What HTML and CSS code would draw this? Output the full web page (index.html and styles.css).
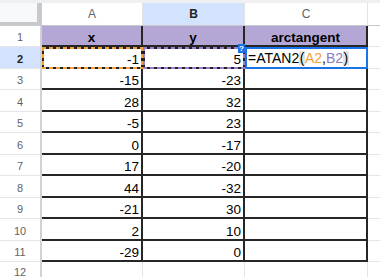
FILE: index.html
```html
<!DOCTYPE html>
<html>
<head>
<meta charset="utf-8">
<link rel="stylesheet" href="styles.css">
</head>
<body>
<div class="strip"></div>
<div class="sheet">
  <div class="corner"></div>
  <div class="colhead">A</div>
  <div class="colhead sel">B</div>
  <div class="colhead">C</div>
  <div class="colhead blank"></div>

  <div class="rowhead">1</div>
  <div class="cell th">x</div>
  <div class="cell th">y</div>
  <div class="cell th">arctangent</div>
  <div class="gap"></div>

  <div class="rowhead sel">2</div>
  <div class="cell num">-1<span class="ants ants-a"></span></div>
  <div class="cell num">5<span class="ants ants-b"></span></div>
  <div class="cell edit"><span class="badge">?</span>=ATAN2<span class="paren">(</span><span class="ref-a">A2</span>,<span class="ref-b">B2</span><span class="paren">)</span></div>
  <div class="gap"></div>

  <div class="rowhead">3</div>
  <div class="cell num">-15</div>
  <div class="cell num">-23</div>
  <div class="cell"></div>
  <div class="gap"></div>

  <div class="rowhead">4</div>
  <div class="cell num">28</div>
  <div class="cell num">32</div>
  <div class="cell"></div>
  <div class="gap"></div>

  <div class="rowhead">5</div>
  <div class="cell num">-5</div>
  <div class="cell num">23</div>
  <div class="cell"></div>
  <div class="gap"></div>

  <div class="rowhead">6</div>
  <div class="cell num">0</div>
  <div class="cell num">-17</div>
  <div class="cell"></div>
  <div class="gap"></div>

  <div class="rowhead">7</div>
  <div class="cell num">17</div>
  <div class="cell num">-20</div>
  <div class="cell"></div>
  <div class="gap"></div>

  <div class="rowhead">8</div>
  <div class="cell num">44</div>
  <div class="cell num">-32</div>
  <div class="cell"></div>
  <div class="gap"></div>

  <div class="rowhead">9</div>
  <div class="cell num">-21</div>
  <div class="cell num">30</div>
  <div class="cell"></div>
  <div class="gap"></div>

  <div class="rowhead">10</div>
  <div class="cell num">2</div>
  <div class="cell num">10</div>
  <div class="cell"></div>
  <div class="gap"></div>

  <div class="rowhead">11</div>
  <div class="cell num">-29</div>
  <div class="cell num">0</div>
  <div class="cell"></div>
  <div class="gap"></div>

  <div class="rowhead last">12</div>
  <div class="empty"></div>
  <div class="empty"></div>
  <div class="empty"></div>
  <div class="gap last"></div>
</div>
</body>
</html>
```

FILE: styles.css
```css
html, body {
  margin: 0;
  padding: 0;
  background: #ffffff;
  overflow: hidden;
}

body {
  width: 380px;
  height: 277px;
  font-family: "Liberation Sans", Arial, sans-serif;
}

.strip {
  height: 3px;
  background: #eef0f1;
}

.sheet {
  display: grid;
  grid-template-columns: 42px 101px 102px 123px 12px;
  grid-template-rows: 22.5px repeat(11, 21.5px) 1fr;
  height: 274px;
}

.corner {
  box-sizing: border-box;
  background: #f8f9fa;
  border-right: 5px solid #c7c9cc;
  border-bottom: 4px solid #c7c9cc;
}

.colhead {
  box-sizing: border-box;
  display: flex;
  align-items: center;
  justify-content: center;
  border-right: 1px solid #e1e3e6;
  border-bottom: 1px solid #c4c7cb;
  font-size: 12px;
  line-height: 14px;
  color: #5f6368;
  background: #ffffff;
}

.colhead.sel {
  background: #d3e3fd;
  color: #1f1f1f;
  font-weight: bold;
}

.colhead.blank {
  border-right: none;
}

.rowhead {
  box-sizing: border-box;
  display: flex;
  align-items: center;
  justify-content: center;
  padding-top: 4px;
  border-right: 2px solid #d0d3d6;
  border-bottom: 1px solid #e3e5e8;
  font-size: 11px;
  line-height: 13px;
  color: #5f6368;
}

.rowhead.sel {
  background: #d3e3fd;
  color: #1f1f1f;
  font-weight: bold;
}

.rowhead.last {
  border-bottom: none;
}

.cell {
  box-sizing: border-box;
  position: relative;
  display: flex;
  align-items: flex-end;
  border-right: 2px solid #262626;
  border-bottom: 2px solid #262626;
  font-size: 13.5px;
  line-height: 14px;
  color: #000000;
}

.th {
  justify-content: center;
  background: #b4a7d6;
  font-weight: bold;
}

.num {
  justify-content: flex-end;
  padding-right: 2px;
}

.edit {
  align-items: center;
  border: 2px solid #1a73e8;
  padding-left: 1px;
  background: #ffffff;
  font-size: 14px;
  z-index: 2;
}

.paren {
  background: #e3e4e6;
  line-height: 14px;
  padding: 0 0.5px;
}

.ref-a {
  color: #f2a03d;
}

.ref-b {
  color: #8e7cc3;
}

.badge {
  position: absolute;
  left: -9px;
  top: -5px;
  width: 7px;
  height: 9px;
  background: #1a73e8;
  color: #ffffff;
  font-size: 8px;
  font-weight: bold;
  line-height: 9px;
  text-align: center;
}

.ants {
  position: absolute;
  top: 0;
  left: 0;
  right: -2px;
  bottom: -2px;
  pointer-events: none;
}

.ants-a {
  background:
    repeating-linear-gradient(90deg, #f2a03d 0 4px, #222 4px 7px) top / 100% 2px no-repeat,
    repeating-linear-gradient(90deg, #f2a03d 0 4px, #222 4px 7px) bottom / 100% 2px no-repeat,
    repeating-linear-gradient(180deg, #f2a03d 0 4px, #222 4px 7px) left / 2px 100% no-repeat,
    repeating-linear-gradient(180deg, #f2a03d 0 4px, #222 4px 7px) right / 2px 100% no-repeat;
}

.ants-b {
  background:
    repeating-linear-gradient(90deg, #9b7fcf 0 4px, #222 4px 7px) top / 100% 2px no-repeat,
    repeating-linear-gradient(90deg, #9b7fcf 0 4px, #222 4px 7px) bottom / 100% 2px no-repeat,
    repeating-linear-gradient(180deg, #9b7fcf 0 4px, #222 4px 7px) left / 2px 100% no-repeat,
    repeating-linear-gradient(180deg, #9b7fcf 0 4px, #222 4px 7px) right / 2px 100% no-repeat;
}

.gap {
  box-sizing: border-box;
  border-bottom: 1px solid #e3e5e8;
}

.gap.last {
  border-bottom: none;
}

.empty {
  box-sizing: border-box;
  border-right: 1px solid #e3e5e8;
}
```
